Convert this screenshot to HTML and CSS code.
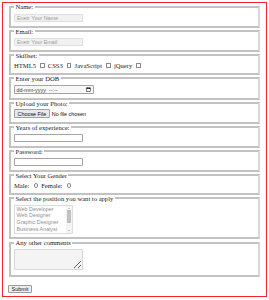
FILE: index.html
```html
<!DOCTYPE html>
<html lang="en">
<head>
<meta charset="utf-8">
<title>Form</title>
<link rel="stylesheet" href="styles.css">
</head>
<body>
<form class="form">
  <fieldset class="fs">
    <legend>Name:</legend>
    <input class="txt filled first" type="text" placeholder="Enetr Your Name">
  </fieldset>
  <fieldset class="fs">
    <legend>Email:</legend>
    <input class="txt filled" type="email" placeholder="Enetr Your Email">
  </fieldset>
  <fieldset class="fs">
    <legend>Skillset:</legend>
    <div class="row">HTML5 <input class="cb" type="checkbox"> CSS3 <input class="cb" type="checkbox"> JavaScript <input class="cb" type="checkbox"> jQuery <input class="cb" type="checkbox"></div>
  </fieldset>
  <fieldset class="fs">
    <legend>Enter your DOB</legend>
    <div class="dt"><span class="dt-text">dd-mm-yyyy&nbsp;&nbsp;--:--</span>
      <svg class="cal" viewBox="0 0 10 10" width="5" height="5"><rect x="1" y="1.8" width="8" height="7.4" fill="none" stroke="#222" stroke-width="1.1"/><rect x="1" y="1.8" width="8" height="2" fill="#222"/><rect x="2.6" y="0.4" width="1" height="2" fill="#222"/><rect x="6.4" y="0.4" width="1" height="2" fill="#222"/></svg>
    </div>
  </fieldset>
  <fieldset class="fs">
    <legend>Upload your Photo:</legend>
    <div class="file"><span class="file-btn">Choose File</span><span class="file-name">No file chosen</span></div>
  </fieldset>
  <fieldset class="fs">
    <legend>Years of experience:</legend>
    <input class="txt plain" type="number">
  </fieldset>
  <fieldset class="fs">
    <legend>Password:</legend>
    <input class="txt plain" type="password">
  </fieldset>
  <fieldset class="fs">
    <legend>Select Your Gender</legend>
    <div class="row">Male: <input class="rd" type="radio" name="g"> Female: <input class="rd" type="radio" name="g"></div>
  </fieldset>
  <fieldset class="fs">
    <legend>Select the position you want to apply</legend>
    <div class="list">
      <div class="opts">
        <div class="opt">Web Developer</div>
        <div class="opt">Web Designer</div>
        <div class="opt">Graphic Designer</div>
        <div class="opt">Business Analyst</div>
      </div>
      <div class="sb">
        <span class="arr up"></span>
        <span class="thumb"></span>
        <span class="arr down"></span>
      </div>
    </div>
  </fieldset>
  <fieldset class="fs">
    <legend>Any other comments</legend>
    <textarea class="ta"></textarea>
  </fieldset>
  <button class="submit" type="button">Submit</button>
</form>
</body>
</html>
```
FILE: styles.css
```css
html, body {
  margin: 0;
  background: #fff;
}
body {
  font-family: "Liberation Serif", "Times New Roman", serif;
  color: #222;
}
.form {
  margin: 2px;
  border: 1px solid #f2232a;
  padding: 0 5px 2.3px;
  display: flex;
  flex-direction: column;
  align-items: flex-start;
}
.fs {
  align-self: stretch;
  margin: 0 1px;
  padding: 2.8px 3px 3.7px;
  border-width: 2px;
  border-style: solid;
  border-color: #c2c2c2 #d9d9d9 #c2c2c2 #c2c2c2;
  min-width: 0;
}
legend {
  font-size: 6.6px;
  line-height: 7px;
  padding: 0 1.5px;
  color: #222;
}
.txt {
  display: block;
  width: 68.5px;
  height: 8.5px;
  box-sizing: border-box;
  margin: 0;
  padding: 0 2px;
  font: 5.4px "Liberation Sans", Arial, sans-serif;
  border-radius: 1px;
  outline: none;
}
.first {
  margin-top: 1px;
}
.filled {
  background: #f1f1f1;
  border: 1px solid #dedede;
}
.filled::placeholder {
  color: #9c9c9c;
}
.plain {
  background: #fff;
  border: 1px solid #a4a4a4;
}
.row {
  font-size: 6.6px;
  line-height: 7.5px;
  height: 7.5px;
  display: flex;
  align-items: center;
  white-space: pre;
}
.cb, .rd {
  appearance: none;
  -webkit-appearance: none;
  width: 4.5px;
  height: 4.5px;
  margin: 0 1.5px 0 2.5px;
  border: 1px solid #8a8a8a;
  border-radius: 0.5px;
  background: #fff;
  box-sizing: border-box;
}
.rd {
  border-radius: 50%;
}
.dt {
  width: 79.5px;
  height: 9.5px;
  box-sizing: border-box;
  border: 1px solid #a4a4a4;
  border-radius: 1px;
  background: #f7f7f7;
  display: flex;
  align-items: center;
  justify-content: space-between;
  padding: 0 2px 0 1.5px;
  font: 5.4px "Liberation Sans", Arial, sans-serif;
  color: #444;
}
.cal {
  display: block;
}
.file {
  height: 8.5px;
  display: flex;
  align-items: center;
  font: 5.4px "Liberation Sans", Arial, sans-serif;
  color: #111;
}
.file-btn {
  height: 9px;
  box-sizing: border-box;
  padding: 0 2.5px;
  display: flex;
  align-items: center;
  border: 1px solid #a0a0a0;
  border-radius: 1px;
  background: #e9e9e9;
  margin-right: 2px;
}
.list {
  width: 59px;
  height: 29px;
  box-sizing: border-box;
  border: 1px solid #dcdcdc;
  display: flex;
  background: #fff;
}
.opts {
  flex: 1;
  padding: 0 1.5px;
  font: 5.4px/6.8px "Liberation Sans", Arial, sans-serif;
  color: #8f8f8f;
  white-space: nowrap;
  overflow: hidden;
}
.sb {
  width: 6px;
  display: flex;
  flex-direction: column;
  align-items: center;
  background: #f4f4f4;
}
.arr {
  width: 0;
  height: 0;
  border-left: 1.5px solid transparent;
  border-right: 1.5px solid transparent;
  margin: 2px 0 1.5px;
}
.arr.up {
  border-bottom: 1.5px solid #a3a3a3;
}
.arr.down {
  border-top: 1.5px solid #a3a3a3;
  margin: auto 0 2px;
}
.thumb {
  width: 4px;
  height: 13px;
  background: #c1c1c1;
  flex: 0 0 auto;
}
.ta {
  display: block;
  width: 69px;
  height: 20.7px;
  box-sizing: border-box;
  margin: 0 0 1.1px;
  border: 1px solid #d6d6d6;
  border-radius: 1px;
  background: #f4f4f4;
  resize: both;
}
.submit {
  margin-top: 8.3px;
  width: 24px;
  height: 8.4px;
  padding: 0;
  font: 5.4px "Liberation Sans", Arial, sans-serif;
  border: 1px solid #9a9a9a;
  border-radius: 1px;
  background: #efefef;
  color: #111;
}
```
